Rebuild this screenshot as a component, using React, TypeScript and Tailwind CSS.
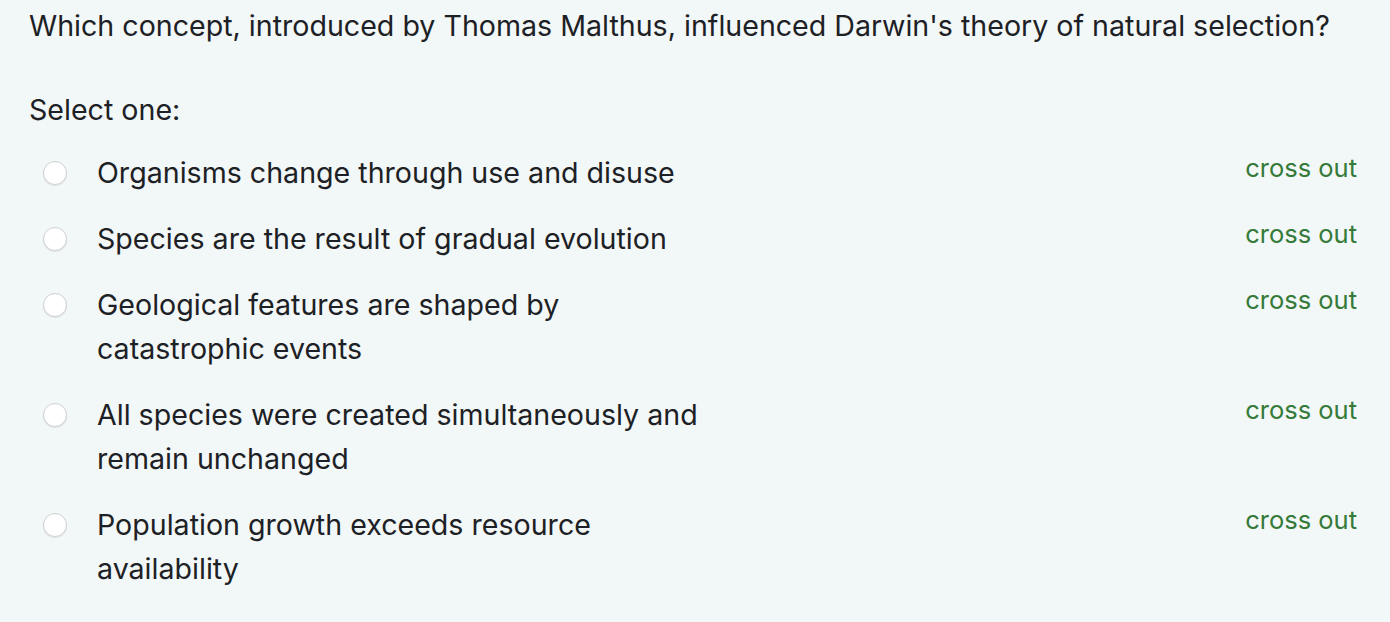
const options = [
  "Organisms change through use and disuse",
  "Species are the result of gradual evolution",
  "Geological features are shaped by catastrophic events",
  "All species were created simultaneously and remain unchanged",
  "Population growth exceeds resource availability",
];

function Radio() {
  return (
    <span className="mt-[10px] block h-[24px] w-[24px] shrink-0 rounded-full border border-[#cdd0d3] bg-white shadow-[0_1px_1px_rgba(0,0,0,0.08)]" />
  );
}

export default function App() {
  return (
    <div className="min-h-[622px] bg-[#f2f7f7] pl-[29px] pr-[33px] font-['Inter','Liberation_Sans',sans-serif] text-[#1d2125]">
      <p className="pt-[4px] text-[28.6px] leading-[44px]">
        Which concept, introduced by Thomas Malthus, influenced Darwin's theory of natural selection?
      </p>

      <p className="mt-[40px] text-[28.6px] leading-[44px]">Select one:</p>

      <div className="mt-[19px] flex flex-col gap-[22px]">
        {options.map((text) => (
          <div key={text} className="flex items-start">
            <div className="flex w-[68px] pl-[14px]">
              <Radio />
            </div>
            <label className="w-[615px] text-[28.6px] leading-[44px]">{text}</label>
            <button className="ml-auto text-[25.5px] leading-[34px] text-[#357a38]">
              cross out
            </button>
          </div>
        ))}
      </div>
    </div>
  );
}
